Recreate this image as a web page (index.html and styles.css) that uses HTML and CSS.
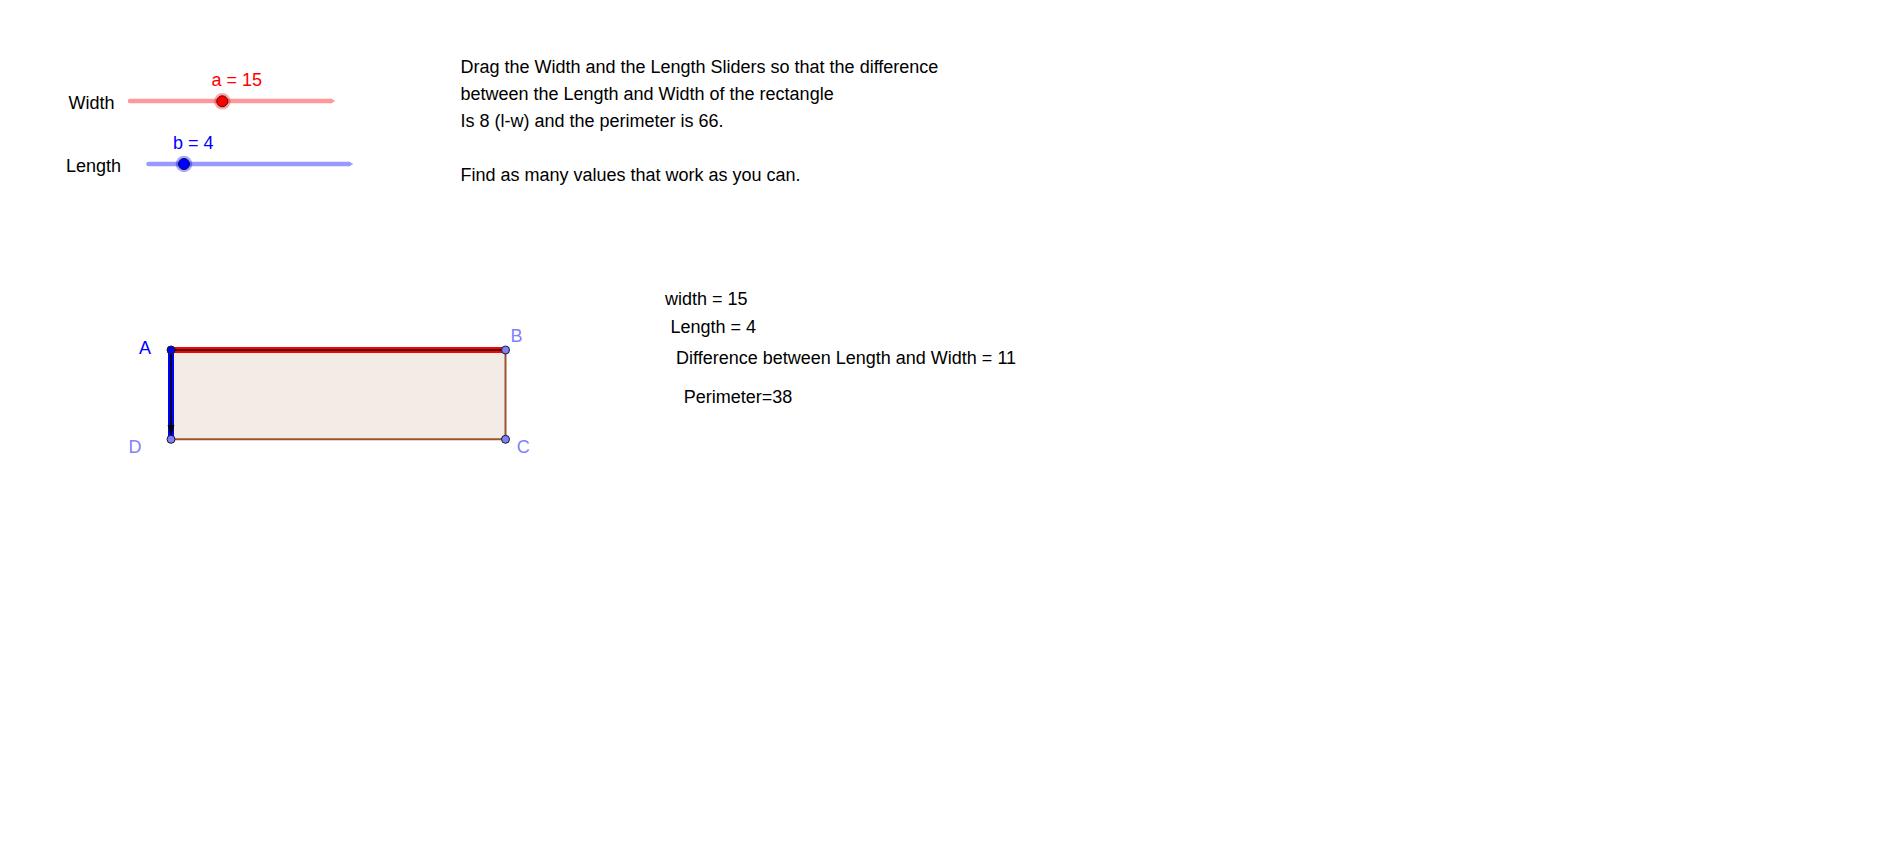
FILE: index.html
```html
<!DOCTYPE html>
<html lang="en">
<head>
<meta charset="utf-8">
<title>Rectangle sliders</title>
<link rel="stylesheet" href="styles.css">
</head>
<body>
<main class="applet">
<svg class="canvas" width="1887" height="864" viewBox="0 0 1887 864" xmlns="http://www.w3.org/2000/svg">
  <!-- Width slider -->
  <text class="lbl" x="68.6" y="108.7">Width</text>
  <line class="track-red" x1="130" y1="101" x2="331" y2="101"/>
  <polygon class="tip-red" points="330,98.6 335.5,101 330,103.4"/>
  <circle class="halo-red" cx="222.3" cy="101.3" r="8.3"/>
  <circle class="dot-red" cx="222.3" cy="101.3" r="5.5"/>
  <text class="lbl red" x="211.4" y="86">a = 15</text>

  <!-- Length slider -->
  <text class="lbl" x="66" y="171.7">Length</text>
  <line class="track-blue" x1="148.5" y1="164" x2="349" y2="164"/>
  <polygon class="tip-blue" points="348,161.6 353.5,164 348,166.4"/>
  <circle class="halo-blue" cx="184" cy="164" r="8.3"/>
  <circle class="dot-blue" cx="184" cy="164" r="5.5"/>
  <text class="lbl blue" x="173" y="149">b = 4</text>

  <!-- Instructions -->
  <text class="note" x="460.4" y="72.6">Drag the Width and the Length Sliders so that the difference</text>
  <text class="note" x="460.4" y="99.6">between the Length and Width of the rectangle</text>
  <text class="note" x="460.4" y="126.8">Is 8 (l-w) and the perimeter is 66.</text>
  <text class="note" x="460.4" y="181">Find as many values that work as you can.</text>

  <!-- Rectangle -->
  <polygon class="rect-fill" points="171,350 505.5,350 505.5,439.3 171,439.3"/>
  <line class="edge" x1="505.5" y1="350" x2="505.5" y2="439.3"/>
  <line class="edge" x1="171" y1="439.3" x2="505.5" y2="439.3"/>
  <line class="seg-red" x1="171" y1="350" x2="505.5" y2="350"/>
  <line class="seg-core" x1="171" y1="350" x2="505.5" y2="350"/>
  <line class="seg-blue" x1="171" y1="350" x2="171" y2="439.3"/>
  <line class="seg-core" x1="171" y1="350" x2="171" y2="428"/>
  <polygon class="arrow" points="167.6,425 174.4,425 171,436"/>
  <circle class="pt-free" cx="171" cy="350" r="4"/>
  <circle class="pt-dep" cx="505.5" cy="350" r="4"/>
  <circle class="pt-dep" cx="505.5" cy="439.3" r="4"/>
  <circle class="pt-dep" cx="171" cy="439.3" r="4"/>
  <text class="lbl blue" x="139" y="354">A</text>
  <text class="lbl pale" x="510.4" y="342">B</text>
  <text class="lbl pale" x="516.8" y="453.3">C</text>
  <text class="lbl pale" x="128.6" y="453">D</text>

  <!-- Values -->
  <text class="val" x="665" y="304.5">width = 15</text>
  <text class="val" x="670.5" y="333">Length = 4</text>
  <text class="val" x="676" y="364.3">Difference between Length and Width = 11</text>
  <text class="val" x="683.8" y="403.3">Perimeter=38</text>
</svg>
</main>
</body>
</html>
```

FILE: styles.css
```css
html, body {
  margin: 0;
  padding: 0;
  background: #ffffff;
}

.applet {
  width: 1887px;
  height: 864px;
  overflow: hidden;
}

.canvas {
  display: block;
}

.canvas text {
  font-family: "Liberation Sans", Arial, sans-serif;
}

.lbl {
  font-size: 18px;
  fill: #000000;
}

.val {
  font-size: 18px;
  fill: #000000;
}

.note {
  font-size: 18px;
  fill: #000000;
}

.red { fill: #ff0000; }
.blue { fill: #0000ff; }
.pale { fill: #7f7fff; }

.track-red {
  stroke: #ff9999;
  stroke-width: 4.5;
  stroke-linecap: round;
}
.tip-red { fill: #ff9999; }

.track-blue {
  stroke: #9999ff;
  stroke-width: 4.5;
  stroke-linecap: round;
}
.tip-blue { fill: #9999ff; }

.halo-red { fill: rgba(255, 0, 0, 0.35); }
.dot-red {
  fill: #ff0000;
  stroke: #3a1010;
  stroke-width: 1;
}

.halo-blue { fill: rgba(0, 0, 255, 0.35); }
.dot-blue {
  fill: #0000ff;
  stroke: #10103a;
  stroke-width: 1;
}

.rect-fill { fill: #f3ebe6; }

.edge {
  stroke: #99552b;
  stroke-width: 2;
}

.seg-red {
  stroke: #ff0000;
  stroke-width: 6;
}

.seg-blue {
  stroke: #0000ff;
  stroke-width: 6;
}

.seg-core {
  stroke: #000000;
  stroke-width: 1.6;
}

.arrow { fill: #000000; }

.pt-free {
  fill: #0000ff;
  stroke: #1a1a1a;
  stroke-width: 1;
}

.pt-dep {
  fill: #7f7fff;
  stroke: #1a1a1a;
  stroke-width: 1;
}
```
